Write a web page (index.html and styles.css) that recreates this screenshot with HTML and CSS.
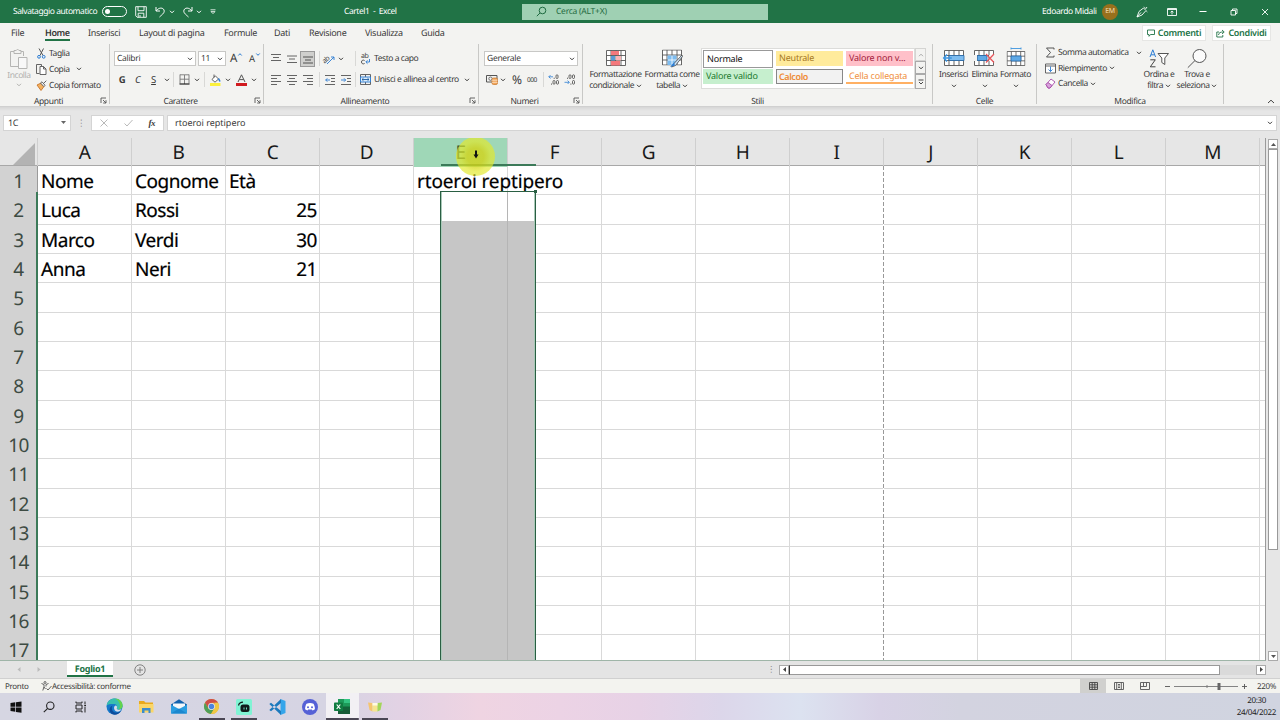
FILE: index.html
```html
<!DOCTYPE html>
<html lang="it">
<head>
  <meta charset="UTF-8" />
  <meta name="viewport" content="width=device-width, initial-scale=1.0" />
  <title>Cartel1 - Excel</title>
  <link rel="stylesheet" href="styles.css">
</head>
<body>

  <svg width="0" height="0" class="defs">
    <symbol id="chev" viewBox="0 0 6 4"><path d="M1 .8 3 2.8 5 .8" fill="none" stroke="currentColor" stroke-width="1"/></symbol>
    <symbol id="launch" viewBox="0 0 7 7"><path d="M1 6V1h5M3 3l3 3M6 3.2V6H3.2" fill="none" stroke="#555" stroke-width=".9"/></symbol>
    <symbol id="table" viewBox="0 0 20 16"><path d="M.5 .5h19v15H.5z" fill="#fff"/><path d="M.5 .5h19v15H.5zM.5 5.5h19M.5 10.5h19M5 .5v15M10 .5v15M15 .5v15" fill="none" stroke="#555" stroke-width=".9"/></symbol>
  </svg>

  <header class="titlebar">
    <div class="quick">
      <span class="autosave">Salvataggio automatico</span>
      <span class="toggle"></span>
      <svg class="save" width="12" height="12" viewBox="0 0 12 12" fill="none" stroke="#fff" stroke-width=".9"><path d="M.7 .7h10.6v10.6H2.2L.7 9.8zM3 .7v4h6v-4M3.2 11.3V7.2h5.6v4.1M5 11V9"/></svg>
      <svg class="undo" width="11" height="12" viewBox="0 0 11 12" fill="none" stroke="#fff"><path d="M1 1v4h4M1.2 4.8C4 1.2 8 1.5 9 4c.8 2.600-1 3.800-4.500 7"/></svg>
      <svg class="chev" width="6" height="4"><use href="#chev"/></svg>
      <svg class="redo" width="11" height="12" viewBox="0 0 11 12" fill="none" stroke="#fff"><path d="M10 1v4H6M9.800 4.800C7 1.200 3 1.500 2 4c-.8 2.600 1 3.800 4.500 7"/></svg>
      <svg class="chev" width="6" height="4"><use href="#chev"/></svg>
      <svg class="more" width="6" height="6" viewBox="0 0 6 6" fill="none" stroke="#fff" stroke-width=".8"><path d="M.5 .8h5M1 2.600l2 2 2-2z"/></svg>
    </div>
    <div class="doc">Cartel1&nbsp; -&nbsp; Excel</div>
    <div class="search">
      <svg width="11" height="11" viewBox="0 0 11 11" fill="none" stroke="#1f6b41"><circle cx="6.500" cy="4.500" r="3.300"/><path d="M4 7 .8 10.200"/></svg>
      <span>Cerca (ALT+X)</span>
    </div>
    <div class="account">
      <span class="user">Edoardo Midali</span>
      <span class="avatar">EM</span>
      <svg class="pen" width="12" height="12" viewBox="0 0 12 12" fill="none" stroke="#fff" stroke-width=".9"><path d="M1 11 3 5.500 7.500 2 10 4.500 6 9zM1 11l4-4.500M8 .8l1 1M11 1 9.500 3M10.500 5.500l.8.500"/></svg>
      <svg class="display" width="10" height="8" viewBox="0 0 10 8" fill="none" stroke="#fff" stroke-width=".9"><path d="M.5 .5h9v7h-9zM.5 1.500h9M5 6.500V3M3.500 4.300 5 3l1.500 1.300"/></svg>
      <svg class="win" width="8" height="8" viewBox="0 0 8 8" stroke="#fff"><path d="M.5 3.500h7"/></svg>
      <svg class="win" width="8" height="8" viewBox="0 0 8 8" fill="none" stroke="#fff" stroke-width=".9"><path d="M1 2.500h4.500V7H1zM2.500 2.500V1H7v4.500H5.500"/></svg>
      <svg width="8" height="8" viewBox="0 0 8 8" stroke="#fff" stroke-width=".9"><path d="M1 1l6 6M7 1 1 7"/></svg>
    </div>
  </header>

  <nav class="tabs">
    <span class="t-file">File</span>
    <span class="t-home active">Home</span>
    <span class="t-ins">Inserisci</span>
    <span class="t-lay">Layout di pagina</span>
    <span class="t-for">Formule</span>
    <span class="t-dat">Dati</span>
    <span class="t-rev">Revisione</span>
    <span class="t-vis">Visualizza</span>
    <span class="t-gui">Guida</span>
    <div class="share">
      <b class="pill comment"><svg width="8" height="8" viewBox="0 0 8 8" fill="none" stroke="#217346" stroke-width=".9"><path d="M.5 1h7v4.500H3.500L2 7.300V5.500H.5z"/></svg>Commenti</b>
      <b class="pill"><svg width="9" height="9" viewBox="0 0 9 9" fill="none" stroke="#217346" stroke-width=".9"><path d="M3 3H.8v5h6V6M2.500 6c.3-2.500 2-3 5-3M6 1l2.200 2L6 5"/></svg>Condividi</b>
    </div>
  </nav>

  <section class="ribbon">
    <div class="group g-clip">
      <div class="paste">
        <svg width="20" height="22" viewBox="0 0 20 22" fill="none" stroke="#b5b5b3"><path d="M9 18.500H1.500v-15H5M12 3.500h2.500V8M5 2.500h2.200a1.500 1.500 0 0 1 2.800 0h2V5.500H5z"/><path d="M9.500 9.500h8.500v11h-8.500z" fill="#f8f8f8"/></svg>
        <span>Incolla</span>
        <svg class="chev" width="6" height="4"><use href="#chev"/></svg>
      </div>
      <div class="stack">
        <div><svg width="11" height="11" viewBox="0 0 11 11" fill="none" stroke="#555"><path d="M3 .5 7 7.500M7.500 .5 4 7.500"/><g stroke="#2b7cd3"><circle cx="3" cy="8.800" r="1.400"/><circle cx="7.700" cy="8.800" r="1.400"/></g></svg>Taglia</div>
        <div><svg width="11" height="11" viewBox="0 0 11 11" fill="none" stroke="#555" stroke-width=".9"><path d="M3.500 9.500h-3v-9h5v1.500"/><path d="M4 2.500h3.500l2.500 2.500v5.500H4zM7.500 2.500V5H10" fill="#fff"/></svg>Copia <svg class="chev far" width="6" height="4"><use href="#chev"/></svg></div>
        <div><svg width="11" height="11" viewBox="0 0 11 11"><path d="M1 5 5 3l3 3.500-3 4z" fill="#f3b15f" stroke="#c36a1c" stroke-width=".8"/><path d="M4.500 3 6 1.800l3 3.500L7.800 6.500zM7.500 3.500 10.300 .7" fill="#fff" stroke="#555" stroke-width=".9"/></svg>Copia formato</div>
      </div>
      <footer>Appunti</footer><svg class="launch" width="7" height="7"><use href="#launch"/></svg>
    </div>

    <div class="group g-font">
      <div class="line font1">
        <span class="box">Calibri<svg class="chev" width="6" height="4"><use href="#chev"/></svg></span>
        <span class="box">11<svg class="chev" width="6" height="4"><use href="#chev"/></svg></span>
        <span class="grow">A<svg width="4" height="3" viewBox="0 0 4 3"><path d="M.3 2.500 2 .7l1.700 1.800" fill="none" stroke="#2b7cd3"/></svg></span>
        <span class="shrink">A<svg width="4" height="3" viewBox="0 0 4 3"><path d="M.3 .5 2 2.300 3.700 .5" fill="none" stroke="#2b7cd3"/></svg></span>
      </div>
      <div class="line font2">
        <b class="fmt">G</b><i class="fmt">C</i><u class="fmt">S</u>
        <svg class="chev" width="6" height="4"><use href="#chev"/></svg>
        <hr>
        <svg width="11" height="11" viewBox="0 0 11 11" fill="none" stroke="#777" stroke-width=".9"><path d="M1 .5v9M10 .5v9M1 .8h9M5.500 1v9M1 5.200h9"/><path d="M.5 10h10" stroke="#222" stroke-width="1.200"/></svg>
        <svg class="chev" width="6" height="4"><use href="#chev"/></svg>
        <hr>
        <svg width="11" height="12" viewBox="0 0 11 12" fill="none"><path d="M2 5.500 5.300 1.800 8.500 5 5 8.200zM4 .5v3" stroke="#555" stroke-width=".9" fill="#fff"/><path d="M8.500 4.500 10 7.500" stroke="#2b7cd3" stroke-width="1.500"/><path d="M0 9h10.500v3H0z" fill="#fbf03c"/></svg>
        <svg class="chev" width="6" height="4"><use href="#chev"/></svg>
        <svg width="11" height="12" viewBox="0 0 11 12" fill="none"><path d="M2 8 5.500 .8 9 8M3.200 5.600h4.600" stroke="#555"/><path d="M0 9h11v3H0z" fill="#d11a1f"/></svg>
        <svg class="chev" width="6" height="4"><use href="#chev"/></svg>
      </div>
      <footer>Carattere</footer><svg class="launch" width="7" height="7"><use href="#launch"/></svg>
    </div>

    <div class="group g-align">
      <div class="line al1">
        <svg width="10" height="10" viewBox="0 0 10 10" stroke="#555" stroke-width=".9"><path d="M0 .5h10M2 3.500h6M0 6.500h10"/></svg>
        <svg width="10" height="10" viewBox="0 0 10 10" stroke="#555" stroke-width=".9"><path d="M0 2h10M2 5h6M0 8.500h10"/></svg>
        <span class="pressed"><svg width="10" height="10" viewBox="0 0 10 10" stroke="#444" stroke-width=".9"><path d="M0 3h10M2 6h6M0 9h10"/></svg></span>
        <hr>
        <svg width="12" height="12" viewBox="0 0 12 12" fill="none"><text x="-1" y="8" font-size="7" fill="#444" transform="rotate(-40 4 6)">ab</text><path d="M4 11 11 4M8 4h3v3" stroke="#2b7cd3" stroke-width=".9"/></svg>
        <svg class="chev" width="6" height="4"><use href="#chev"/></svg>
        <hr>
        <svg width="11" height="12" viewBox="0 0 11 12" fill="none"><text x="1" y="5" font-size="7" fill="#444">ab</text><path d="M4.600 7.500C2.800 6.500 1.500 7.500 1.500 9s1.300 2.500 3.100 1.500" stroke="#444" stroke-width=".9"/><path d="M9.500 6v3H6M7.500 7.300 5.800 9l1.700 1.700" stroke="#2b7cd3" stroke-width=".9"/></svg>
        <span>Testo a capo</span>
      </div>
      <div class="line al2">
        <svg width="10" height="10" viewBox="0 0 10 10" stroke="#555" stroke-width=".9"><path d="M0 .5h10M0 3.500h6M0 6.500h10M0 9.500h6"/></svg>
        <svg width="10" height="10" viewBox="0 0 10 10" stroke="#555" stroke-width=".9"><path d="M0 .5h10M2 3.500h6M0 6.500h10M2 9.500h6"/></svg>
        <svg width="10" height="10" viewBox="0 0 10 10" stroke="#555" stroke-width=".9"><path d="M0 .5h10M4 3.500h6M0 6.500h10M4 9.500h6"/></svg>
        <hr>
        <svg width="10" height="10" viewBox="0 0 10 10" fill="none" stroke="#555" stroke-width=".9"><path d="M0 .5h10M6 3.500h4M6 6.500h4M0 9.500h10"/><path d="M5 5H.7M2.300 3.300.7 5l1.600 1.700" stroke="#2b7cd3"/></svg>
        <svg width="10" height="10" viewBox="0 0 10 10" fill="none" stroke="#555" stroke-width=".9"><path d="M0 .5h10M6 3.500h4M6 6.500h4M0 9.500h10"/><path d="M0 5h4.500M3 3.300 4.700 5 3 6.700" stroke="#2b7cd3"/></svg>
        <hr>
        <svg width="11" height="11" viewBox="0 0 11 11" fill="none" stroke="#555" stroke-width=".9"><path d="M.5 .5h10v10H.5zM5.500 .5v2.500M5.500 8v2.500"/><path d="M.5 3h10v5H.5z" fill="#dcedfb" stroke="#2b7cd3"/><path d="M2 5.500h7M3.500 4.200 2 5.500l1.500 1.300M7.500 4.200 9 5.500 7.500 6.800" stroke="#1f5f9f"/></svg>
        <span>Unisci e allinea al centro</span>
        <svg class="chev" width="6" height="4"><use href="#chev"/></svg>
      </div>
      <footer>Allineamento</footer><svg class="launch" width="7" height="7"><use href="#launch"/></svg>
    </div>

    <div class="group g-num">
      <div class="line"><span class="box">Generale<svg class="chev" width="6" height="4"><use href="#chev"/></svg></span></div>
      <div class="line num2">
        <svg width="12" height="11" viewBox="0 0 12 11" fill="none"><path d="M.5 1.500h10.500v6.500H.5z" stroke="#555"/><circle cx="4.500" cy="4.700" r="1.700" stroke="#555" stroke-width=".8"/><rect x="6" y="4" width="5.500" height="6.500" rx="1.500" fill="#f2a65a" stroke="#c9762a" stroke-width=".7"/><path d="M6 6.200h5.500M6 8.300h5.500" stroke="#fff" stroke-width=".6"/></svg>
        <svg class="chev" width="6" height="4"><use href="#chev"/></svg>
        <span class="pct">%</span>
        <span class="zeros">000</span>
        <hr>
        <svg width="12" height="11" viewBox="0 0 12 11" fill="none" stroke="#444" stroke-width=".8"><rect x="8" y=".8" width="2" height="3.700" rx="1"/><rect x="5" y="6.500" width="2" height="3.700" rx="1"/><rect x="8.500" y="6.500" width="2" height="3.700" rx="1"/><path d="M3.500 9.500v1.200M6.200 3.700v1.200"/><path d="M5 2.800H.8M2.500 1.100.8 2.800l1.700 1.700" stroke="#2b7cd3"/></svg>
        <svg width="12" height="11" viewBox="0 0 12 11" fill="none" stroke="#444" stroke-width=".8"><rect x="5" y=".8" width="2" height="3.700" rx="1"/><rect x="8.500" y=".8" width="2" height="3.700" rx="1"/><rect x="8.500" y="6.500" width="2" height="3.700" rx="1"/><path d="M3.500 3.700v1.200M6.900 9.500v1.200"/><path d="M.5 8.300h4.700M3.600 6.600l1.700 1.700L3.600 10" stroke="#2b7cd3"/></svg>
      </div>
      <footer>Numeri</footer><svg class="launch" width="7" height="7"><use href="#launch"/></svg>
    </div>

    <div class="group g-style wide">
      <div class="big b-cond">
        <svg width="20" height="17" viewBox="0 0 20 17"><use href="#table" width="20" height="16"/><path d="M5 1h8v4H5zM5 11h9v4.500H5z" fill="#f4787c"/><path d="M5 6h4v4.500H5z" fill="#5b9bd5"/><path d="M10 6h5v4.500h-5z" fill="#f9b4b6"/></svg>
        <span>Formattazione</span><span>condizionale <svg class="chev" width="6" height="4"><use href="#chev"/></svg></span>
      </div>
      <div class="big b-tab">
        <svg width="21" height="18" viewBox="0 0 21 18"><use href="#table" width="20" height="16"/><path d="M5.500 6h9v9.500h-9z" fill="#7dbcf0"/><path d="M6 10.500h12M10 6v9" stroke="#fff" stroke-width=".8"/><path d="M20 5.500 12 14l-2.500 3.500L13.500 16l7-9z" fill="#cfe6fa" stroke="#444" stroke-width=".8"/><path d="m12 13-4 4.500 5-1.500z" fill="#2b7cd3"/></svg>
        <span>Formatta come</span><span>tabella <svg class="chev" width="6" height="4"><use href="#chev"/></svg></span>
      </div>
      <div class="gallery">
        <span class="s-norm">Normale</span><span class="s-neu">Neutrale</span><span class="s-bad">Valore non v...</span>
        <span class="s-good">Valore valido</span><span class="s-calc">Calcolo</span><span class="s-link">Cella collegata</span>
      </div>
      <div class="scroller">
        <span class="off"><svg class="chev up" width="6" height="4"><use href="#chev"/></svg></span>
        <span><svg class="chev" width="6" height="4"><use href="#chev"/></svg></span>
        <span><svg width="6" height="6" viewBox="0 0 6 6" fill="none" stroke="#333" stroke-width=".9"><path d="M.5 1h5M1 3l2 2 2-2"/></svg></span>
      </div>
      <footer>Stili</footer>
    </div>

    <div class="group g-cells wide">
      <div class="big">
        <svg width="21" height="17" viewBox="0 0 21 17"><use href="#table" width="20" height="16" x="1"/><path d="M6 5.500h15v5H6z" fill="#7dbcf0" stroke="#2467a8" stroke-width=".8"/><path d="M.8 8h8M4 4.500.8 8 4 11.500" fill="none" stroke="#3d94de" stroke-width="1.600"/></svg>
        <span>Inserisci</span><span><svg class="chev" width="6" height="4"><use href="#chev"/></svg></span>
      </div>
      <div class="big">
        <svg width="21" height="17" viewBox="0 0 21 17"><use href="#table" width="20" height="16"/><path d="M0 5h3v6H0zM15 5h6v6h-6z" fill="#f3f3f1"/><path d="M3.500 5.500H13v5H3.500z" fill="#5fa9e6" stroke="#2467a8" stroke-width=".8"/><path d="m12 4 8 8.500M20 4l-8 8.500" stroke="#e8545a" stroke-width="1.200"/></svg>
        <span>Elimina</span><span><svg class="chev" width="6" height="4"><use href="#chev"/></svg></span>
      </div>
      <div class="big b-size">
        <svg width="20" height="19" viewBox="0 0 20 19"><use href="#table" width="19" height="15" y="2" x=".5"/><path d="M5 7h10v5H5z" fill="#5fa9e6" stroke="#2467a8" stroke-width=".8"/><path d="M5 -.5h10M5 -1.500v2M15 -1.500v2" stroke="#3d94de" stroke-width=".9"/></svg>
        <span>Formato</span><span><svg class="chev" width="6" height="4"><use href="#chev"/></svg></span>
      </div>
      <footer>Celle</footer>
    </div>

    <div class="group g-edit wide">
      <div class="stack">
        <div><svg width="11" height="11" viewBox="0 0 11 11" fill="none" stroke="#444" stroke-width=".9"><path d="M9 2.500V1H1.500L5.500 5.500 1.500 10H9V8.500"/></svg>Somma automatica <svg class="chev far" width="6" height="4"><use href="#chev"/></svg></div>
        <div><svg width="11" height="11" viewBox="0 0 11 11" fill="none" stroke="#555" stroke-width=".9"><path d="M.5 1h10v9H.5zM.5 3h10" fill="#fff"/><path d="M5.500 3.500v5M3.500 6.500l2 2 2-2" stroke="#2b7cd3"/></svg>Riempimento <svg class="chev" width="6" height="4"><use href="#chev"/></svg></div>
        <div><svg width="11" height="11" viewBox="0 0 11 11" fill="#fff" stroke="#a64aa8" stroke-width=".9"><path d="M1 6.500 6 1l4 3-5 6H3z"/><path d="M1 6.500 3 4.500 7 7.500 5 10H3z" fill="#d9a3dc"/></svg>Cancella <svg class="chev" width="6" height="4"><use href="#chev"/></svg></div>
      </div>
      <div class="big b-sort">
        <svg width="20" height="19" viewBox="0 0 20 19" fill="none"><path d="M1 8 3.800 .8 6.600 8M2 5.800h3.600" stroke="#2b7cd3"/><path d="M1.300 10.800h5L1.300 17.800h5.200" stroke="#444"/><path d="M9 4.500h10.500L15.800 9v6.500L12.800 13.500V9z" fill="#fff" stroke="#555"/></svg>
        <span>Ordina e</span><span>filtra <svg class="chev" width="6" height="4"><use href="#chev"/></svg></span>
      </div>
      <div class="big b-find">
        <svg width="20" height="20" viewBox="0 0 20 20" fill="none" stroke="#555"><circle cx="12.500" cy="7.500" r="6.500" fill="#fbfbfb"/><path d="M8 12 .8 19.200"/></svg>
        <span>Trova e</span><span>seleziona <svg class="chev" width="6" height="4"><use href="#chev"/></svg></span>
      </div>
      <footer>Modifica</footer>
    </div>
    <svg class="collapse" width="8" height="5" viewBox="0 0 8 5"><path d="M1 4 4 1.200 7 4" fill="none" stroke="#444"/></svg>
  </section>

  <section class="formula">
    <div class="name">1C<svg width="5" height="3" viewBox="0 0 5 3"><path d="M0 0h5L2.500 3z" fill="#666"/></svg></div>
    <div class="dots">⋮</div>
    <div class="fx">
      <svg width="8" height="8" viewBox="0 0 8 8" stroke="#b9b9b9"><path d="M.5 .5l7 7M7.500 .5l-7 7"/></svg>
      <svg width="9" height="8" viewBox="0 0 9 8" fill="none" stroke="#b9b9b9"><path d="M.5 4.500 3 7l5.500-6"/></svg>
      <em>fx</em>
    </div>
    <div class="value">rtoeroi reptipero<svg class="chev" width="6" height="4"><use href="#chev"/></svg></div>
  </section>

  <main class="sheet">
    <div class="grid">
      <div class="cols">
        <span class="corner"><svg width="22" height="22" viewBox="0 0 22 22"><path d="M22 0v22H0z" fill="#b3b3b3"/></svg></span>
        <span>A</span><span>B</span><span>C</span><span>D</span><span class="hot">E</span><span>F</span><span>G</span><span>H</span><span>I</span><span>J</span><span>K</span><span>L</span><span>M</span><span></span>
      </div>
      <div class="body">
        <div class="row"><b>1</b><span>Nome</span><span>Cognome</span><span>Età</span><span></span><span class="long">rtoeroi reptipero</span></div>
        <div class="row"><b>2</b><span>Luca</span><span>Rossi</span><span class="n">25</span></div>
        <div class="row"><b>3</b><span>Marco</span><span>Verdi</span><span class="n">30</span></div>
        <div class="row"><b>4</b><span>Anna</span><span>Neri</span><span class="n">21</span></div>
        <div class="row"><b>5</b></div>
        <div class="row"><b>6</b></div>
        <div class="row"><b>7</b></div>
        <div class="row"><b>8</b></div>
        <div class="row"><b>9</b></div>
        <div class="row"><b>10</b></div>
        <div class="row"><b>11</b></div>
        <div class="row"><b>12</b></div>
        <div class="row"><b>13</b></div>
        <div class="row"><b>14</b></div>
        <div class="row"><b>15</b></div>
        <div class="row"><b>16</b></div>
        <div class="row last"><b>17</b></div>
      </div>
      <div class="pagebreak"></div>
      <div class="selection"><i></i></div>
      <div class="handle"></div>
      <div class="headline"></div>
      <div class="rowline"></div>
      <div class="pointer"><svg width="6" height="9" viewBox="0 0 6 9"><path d="M2 .5h2v4h1.500L3 8.500.5 4.500H2z" fill="#111"/></svg></div>
    </div>
    <div class="vscroll">
      <span class="btn"><svg width="5" height="3" viewBox="0 0 5 3"><path d="M0 3h5L2.500 0z" fill="#555"/></svg></span>
      <span class="thumb"></span>
      <span class="btn end"><svg width="5" height="3" viewBox="0 0 5 3"><path d="M0 0h5L2.500 3z" fill="#555"/></svg></span>
    </div>
  </main>

  <section class="sheets">
    <svg class="nav1" width="4" height="5" viewBox="0 0 4 5"><path d="M3.500 0v5L.5 2.500z" fill="#bbb"/></svg>
    <svg class="nav2" width="4" height="5" viewBox="0 0 4 5"><path d="M.5 0v5l3-2.500z" fill="#bbb"/></svg>
    <b class="sheet-tab">Foglio1</b>
    <svg class="add" width="12" height="12" viewBox="0 0 12 12" fill="none" stroke="#777" stroke-width=".9"><circle cx="6" cy="6" r="5.200"/><path d="M6 3v6M3 6h6"/></svg>
    <span class="grip">⋮</span>
    <div class="hscroll">
      <span class="btn"><svg width="3" height="5" viewBox="0 0 3 5"><path d="M3 0v5L0 2.500z" fill="#444"/></svg></span>
      <span class="thumb"></span>
      <span class="btn end"><svg width="3" height="5" viewBox="0 0 3 5"><path d="M0 0v5l3-2.500z" fill="#444"/></svg></span>
    </div>
  </section>

  <section class="status">
    <span class="ready">Pronto</span>
    <svg width="11" height="10" viewBox="0 0 11 10" fill="none" stroke="#555" stroke-width=".9"><circle cx="4" cy="1.500" r="1"/><path d="M.5 2.500 3 3.500v2L1.800 9.500M7.500 2.500 5 3.500v2M5.500 7.500l1.500 1.500 3.500-4M3 6l1.500 2"/></svg>
    <span class="acc">Accessibilità: conforme</span>
    <div class="views">
      <span class="on"><svg width="9" height="8" viewBox="0 0 9 8" fill="none" stroke="#444" stroke-width=".9"><path d="M.5 .5h8v7h-8zM.5 2.800h8M.5 5.200h8M3.200 .5v7M5.800 .5v7"/></svg></span>
      <span><svg width="10" height="8" viewBox="0 0 10 8" fill="none" stroke="#555" stroke-width=".9"><path d="M.5 .5h9v7h-9zM2.700 .5v7M7.300 .5v7M4 2.500h2M4 4h2M4 5.500h2"/></svg></span>
      <span><svg width="10" height="8" viewBox="0 0 10 8" fill="none" stroke="#555" stroke-width=".9"><path d="M.5 .5h9v7h-9zM3.500 .5V4.500M6.500 .5v4H.5"/></svg></span>
    </div>
    <svg class="zoom" width="82" height="9" viewBox="0 0 82 9"><path d="M0 4.500h5M77 4.500h5M79.500 2v5" stroke="#555" stroke-width=".9"/><path d="M9 4.500h64M42 3v3" stroke="#777" stroke-width=".9"/><path d="M52.500 1h3v7h-3z" fill="#666"/></svg>
    <span class="pctzoom">220%</span>
  </section>

  <footer class="taskbar">
    <span class="app"><svg width="12" height="12" viewBox="0 0 12 12" fill="#111"><path d="M.5 2 5.300 1.300v4.400H.5zM6 1.200 11.500.4v5.300H6zM.5 6.400h4.800v4.400L.5 10.100zM6 6.400h5.500v5.300L6 10.900z"/></svg></span>
    <span class="app"><svg width="12" height="12" viewBox="0 0 12 12" fill="none" stroke="#222" stroke-width="1.100"><circle cx="7.300" cy="4.700" r="3.700"/><path d="M4.700 7.300 .8 11.200"/></svg></span>
    <span class="app"><svg width="12" height="12" viewBox="0 0 12 12" fill="none" stroke="#222"><path d="M1 .5v1.500h6V.5M1 4h6v4H1zM1 11.500V10h6v1.500M10 .5v2.500M10 6v5.500"/><path d="M9.200 4.500h1.800" stroke-width="1.500"/></svg></span>
    <span class="app"><svg width="17" height="17" viewBox="0 0 17 17"><circle cx="8.500" cy="8.500" r="8" fill="#1679ca"/><path d="M.6 8C1 3 5 .5 8.600.5c5 0 8 3.500 8 7 0 3-2.500 4.500-5 4-1-.2-1.500-.8-1-1.500 1-1.500.2-4-2.600-4C5 6 1.500 6 .6 8z" fill="#39bfae"/><path d="M8.600.5c5 0 8 3.500 8 7 0 2.500-2 4-4 4C16 8 13 2 8.600.5z" fill="#64d34d"/><path d="M6.500 7.500C5 10 6 14 9.500 14.500c2 .3 4-.5 5.500-1.500-2 3.500-6 4.500-9 3C2.500 13.500 3 9 6.500 7.500z" fill="#0d4c9c"/><path d="M9.500 7.500c1.500 0 2 1.500 1.200 3 .3 1.200 3 1.800 5 .5-1 2-3 3-5.200 2.500-2.500-.7-3.500-5-1-6z" fill="#d6dcea"/></svg></span>
    <span class="app"><svg width="15" height="14" viewBox="0 0 15 14"><path d="M0 1h5l1.500 1.500H14V12H0z" fill="#e8a91d"/><path d="M0 4h14.500v8.500H0z" fill="#fbd667"/><path d="M3 13V8h8.500v5H9.500v-2.500h-4V13z" fill="#3c8ccd"/></svg></span>
    <span class="app"><svg width="16" height="15" viewBox="0 0 16 15"><path d="M0 5.500 8 .3l8 5.200V14H0z" fill="#1263ae"/><path d="M2 4.500h12v7H2z" fill="#f5f8fa"/><path d="M0 5.800 8 10l8-4.200v8.700H0z" fill="#2a9de0"/><path d="m0 14.500 8-5 8 5z" fill="#1b87cf"/></svg></span>
    <span class="app run"><svg width="15" height="15" viewBox="0 0 15 15"><circle cx="7.500" cy="7.500" r="7.500" fill="#e2a83a"/><path d="M1 3.800A7.500 7.500 0 0 1 14 3.800H7.500L4.300 9z" fill="#cf4e47"/><path d="M1 3.800a7.500 7.500 0 0 0 6 11.200l3.300-5.600-5.500.6z" fill="#4f9f58"/><path d="M14 3.800A7.500 7.500 0 0 1 7 15l3.700-6V3.800z" fill="#efc844"/><circle cx="7.500" cy="7.500" r="3.400" fill="#eee"/><circle cx="7.500" cy="7.500" r="2.700" fill="#4a84df"/></svg></span>
    <span class="app run"><svg width="16" height="16" viewBox="0 0 16 16"><rect width="16" height="16" rx="1.500" fill="#80f3d4"/><rect x="4.500" y="5.500" width="9" height="7.500" rx="2.500" fill="#101c1c"/><path d="M2.500 6.500C3 4.500 4.500 3.200 7 3.200" fill="none" stroke="#101c1c" stroke-width="1.200"/><path d="M8 8.500v2M10.500 8.500v2" stroke="#80f3d4" stroke-width=".9"/></svg></span>
    <span class="app"><svg width="17" height="16" viewBox="0 0 17 16"><path d="M11.500 0 16.500 2v12l-5 2z" fill="#35a5ea"/><path d="M.3 5 2 3.800 12 12v4zM.3 11 2 12.200 12 4V0z" fill="#1b79bd"/></svg></span>
    <span class="app"><svg width="16" height="16" viewBox="0 0 16 16"><circle cx="8" cy="8" r="8" fill="#5561d6"/><path d="M4.500 4.800c2-1 5-1 7 0 1 1.700 1.500 3.500 1.400 5.500-.8.700-1.600 1-2.400 1.200l-.6-1H6.100l-.6 1c-.8-.2-1.600-.5-2.400-1.200 0-2 .4-3.800 1.400-5.500z" fill="#fff"/><circle cx="6" cy="8.200" r="1" fill="#5561d6"/><circle cx="10" cy="8.200" r="1" fill="#5561d6"/></svg></span>
    <span class="app run current"><svg width="16" height="15" viewBox="0 0 16 15"><path d="M4 0h12v15H4z" fill="#1d9a59"/><path d="M10 0h6v4h-6z" fill="#33c481"/><path d="M4 7.500h6V11H4zM10 7.500h6V15h-6z" fill="#13653a"/><path d="M4 11h12v4H4z" fill="#185c37"/><rect y="3.500" width="9" height="8.500" rx=".8" fill="#107c41"/><path d="m2.700 5.500 3.600 4.500M6.300 5.500 2.700 10" stroke="#fff" stroke-width="1.200"/></svg></span>
    <span class="app run"><svg width="14" height="10" viewBox="0 0 14 10"><path d="M0 .5 4.500 1v8.500L1.500 8z" fill="#f5c56f"/><path d="M4.500 1h5v8.500h-5z" fill="#f7e58f"/><path d="M9.500 1 14 .5 12.500 8l-3 1.500z" fill="#a3d659"/><path d="M4.500 1h5v2.500h-5z" fill="#fffbe4"/></svg></span>
    <div class="clock"><span>20:30</span><span>24/04/2022</span></div>
  </footer>

</body>
</html>
```
FILE: styles.css
```css
* {
  box-sizing: border-box;
}

body {
  width: 1280px;
  height: 720px;
  margin: 0;
  overflow: hidden;
  display: flex;
  flex-direction: column;
  font-family: "Noto Sans", "Open Sans", sans-serif;
  font-size: 8.5px;
  letter-spacing: -0.45px;
  line-height: 11px;
  text-rendering: geometricPrecision;
  color: #3a3a3a;
  background: #e6e6e6;
  white-space: nowrap;
}

svg {
  display: block;
  flex: none;
  overflow: visible;
}

.defs {
  position: absolute;
}

/* title bar */
.titlebar {
  height: 23px;
  flex: none;
  display: grid;
  grid-template-columns: 344px 178px 246px 1fr;
  align-items: center;
  background: #217346;
  color: #fff;
}

.quick {
  display: flex;
  align-items: center;
  padding-left: 13px;
}

.autosave {
  width: 89px;
}

.toggle {
  width: 25px;
  height: 11px;
  border: 1px solid #fff;
  border-radius: 6px;
  padding: 2px;
}

.toggle::before {
  content: "";
  display: block;
  width: 5px;
  height: 5px;
  border-radius: 50%;
  background: #fff;
}

.save { margin-left: 8px; }
.undo { margin-left: 8px; }
.redo { margin-left: 7px; }
.more { margin-left: 8px; }
.quick .chev { margin-left: 3px; }

.search {
  height: 16px;
  display: flex;
  align-items: center;
  gap: 9px;
  padding-left: 14px;
  background: #9fd0b3;
  color: #1f6b41;
  letter-spacing: -0.25px;
}

.account {
  display: flex;
  align-items: center;
  padding-left: 274px;
  letter-spacing: -0.4px;
}

.user {
  width: 60px;
}

.avatar {
  width: 16px;
  height: 16px;
  margin-right: 18px;
  border-radius: 50%;
  background: #98701c;
  color: #f2dcae;
  font-size: 7px;
  line-height: 16px;
  text-align: center;
}

.pen { margin-right: 19px; }
.display { margin-right: 22px; }
.win { margin-right: 23px; }

/* ribbon tabs */
.tabs {
  height: 21px;
  flex: none;
  display: flex;
  align-items: flex-start;
  padding: 4px 0 0 11px;
  background: #f3f3f1;
  font-size: 9px;
  letter-spacing: -0.3px;
  line-height: 12px;
}

.t-file { width: 34px; }
.t-home { margin-right: 18px; }
.t-ins { width: 51px; }
.t-lay { width: 85px; }
.t-for { width: 50px; }
.t-dat { width: 35px; }
.t-rev { width: 56px; }
.t-vis { width: 56px; }

.active {
  width: 25px;
  height: 14px;
  font-weight: 600;
  color: #333;
  border-bottom: 2px solid #217346;
  letter-spacing: -0.4px;
}

.share {
  display: flex;
  gap: 6px;
  margin: -2px 9px 0 auto;
}

.pill {
  height: 16px;
  width: 59px;
  display: flex;
  align-items: center;
  justify-content: center;
  gap: 3px;
  background: #fff;
  border: 1px solid #e6e6e4;
  color: #217346;
  font-weight: 600;
}

.comment {
  width: 64px;
}

/* ribbon */
.ribbon {
  height: 63px;
  flex: none;
  display: flex;
  background: #f3f3f1;
  border-bottom: 1px solid #d0d0d0;
  position: relative;
}

.group {
  position: relative;
  height: 60px;
  border-right: 1px solid #c8c8c6;
}

.group > footer {
  position: absolute;
  left: 0;
  right: 12px;
  bottom: -3px;
  text-align: center;
  letter-spacing: -0.35px;
}

.wide > footer {
  right: 0;
}

.launch {
  position: absolute;
  right: 2px;
  bottom: 0;
}

.chev {
  display: inline-block;
}

.up {
  transform: rotate(180deg);
}

.g-clip { width: 110px; display: flex; padding-top: 1px; }
.g-font { width: 154px; padding-left: 4px; }
.g-align { width: 215px; padding-left: 4px; }
.g-num { width: 104px; padding-left: 5px; }
.g-style { width: 350px; display: flex; }
.g-cells { width: 104px; display: flex; padding-left: 5px; }
.g-edit { width: 187px; display: flex; }

.paste {
  width: 36px;
  display: flex;
  flex-direction: column;
  align-items: center;
  padding: 3px 0 0 2px;
  color: #b0b0ae;
}

.paste span {
  margin: 0 0 2px;
}

.stack div {
  display: flex;
  align-items: center;
  gap: 2px;
  height: 16px;
}

.stack .far {
  margin-left: 5px;
}

.line {
  height: 21px;
  display: grid;
  align-items: center;
  justify-items: center;
}

.line:first-child {
  margin-top: 4px;
}

.line hr {
  width: 1px;
  height: 15px;
  margin: 0;
  border: 0;
  background: #d8d8d6;
}

.box {
  width: 100%;
  height: 15px;
  display: flex;
  align-items: center;
  justify-content: space-between;
  padding: 0 2px;
  background: #fff;
  border: 1px solid #c8c8c6;
  letter-spacing: -0.3px;
}

.font1 {
  grid-template-columns: 82px 28px 17px 18px;
  column-gap: 2px;
}

.font2 { grid-template-columns: 16px 15px 17px 9px 5px 16px 9px 7px 15px 9px 18px 8px; }
.al1 { grid-template-columns: 16px 16px 16px 6px 14px 9px 11px 18px auto; }
.al2 { grid-template-columns: 16px 16px 16px 6px 16px 16px 2px 18px 88px 9px; }
.num2 { grid-template-columns: 15px 8px 20px 14px 5px 16px 16px; }
.g-num .box { width: 94px; justify-self: start; }

.al1, .al2 { justify-content: start; }
.line > span { justify-self: start; }
.al1 hr:nth-of-type(2) { justify-self: end; }

.grow, .shrink {
  display: flex;
  align-items: flex-start;
  padding-left: 2px;
  font-size: 11.500px;
}

.shrink {
  font-size: 9.5px;
}

.grow svg, .shrink svg {
  margin-left: 1px;
}

.fmt {
  font-size: 9.5px;
}

.pressed {
  width: 15px;
  height: 16px;
  display: grid;
  place-items: center;
  background: #cfcfcd;
  border: 1px solid #999;
}

.pct {
  font-size: 12px;
  padding-left: 5px;
}

.zeros {
  font-size: 6.5px;
}

.big {
  width: 31px;
  display: flex;
  flex-direction: column;
  align-items: center;
}

.big > svg {
  height: 25px;
  padding-top: 4px;
  box-sizing: border-box;
}

.b-cond { width: 65px; }
.b-tab { width: 48px; }
.b-sort { width: 40px; margin-left: 4px; }
.b-find { width: 36px; }

.gallery {
  width: 214px;
  height: 41px;
  margin: 4px 0 0 5px;
  display: grid;
  grid-template-columns: 70px 67px 67px;
  grid-template-rows: 17px 16px;
  gap: 1px 3px;
  padding: 1px 0 0 1px;
  background: #fff;
  border: 1px solid #dcdcda;
  font-size: 9px;
  letter-spacing: -0.2px;
}

.gallery span {
  padding: 0 3px;
  align-self: center;
  height: 15px;
  line-height: 14px;
}

.gallery .s-norm {
  height: 18px;
  border: 1.500px solid #999;
  line-height: 15px;
  color: #111;
}

.s-neu { background: #ffeb9c; color: #a6781f; }
.s-bad { background: #ffc0c9; color: #a3203c; }
.s-good { background: #c6efce; color: #1c7a2f; }

.gallery .s-calc {
  background: #f2f2f2;
  color: #ee8a35;
  border: 1px solid #888;
  font-weight: 600;
  line-height: 13px;
  padding: 0 2px;
  letter-spacing: -0.4px;
}

.s-link { color: #f08f3c; border-bottom: 2px solid #ffb063; }

.scroller {
  width: 11px;
  height: 41px;
  margin-top: 4px;
  display: grid;
}

.scroller span {
  display: grid;
  place-items: center;
  border: 1px solid #aaa;
}

.scroller .off {
  color: #aaa;
  border-color: #d4d4d2;
}

.g-edit .stack {
  width: 98px;
  padding: 1px 0 0 8px;
}

.g-edit .stack div {
  height: 15.500px;
}

.collapse {
  position: absolute;
  right: 5px;
  bottom: 2px;
}

/* formula bar */
.formula {
  height: 31px;
  flex: none;
  display: flex;
  align-items: center;
  padding: 0 3px;
  background: linear-gradient(#d6d6d6, #e6e6e6 4px);
  font-size: 9px;
}

.formula > div {
  height: 16px;
  display: flex;
  align-items: center;
}

.formula .name {
  width: 68px;
  justify-content: space-between;
  padding: 0 4px;
  background: #fff;
  border: 1px solid #d4d4d4;
}

.formula .dots {
  width: 20px;
  justify-content: center;
  color: #888;
}

.formula .fx {
  width: 73px;
  justify-content: space-between;
  padding: 0 8px;
  background: #fff;
  border: 1px solid #d4d4d4;
}

.fx em {
  font: italic bold 9px "Liberation Serif", serif;
}

.formula .value {
  flex: 1;
  margin-left: 3px;
  justify-content: space-between;
  padding: 0 3px 0 7px;
  background: #fff;
  border: 1px solid #d4d4d4;
  letter-spacing: 0;
}

/* worksheet */
.sheet {
  height: 523px;
  flex: none;
  display: flex;
  background: #e6e6e6;
}

.grid {
  width: 1266px;
  position: relative;
  overflow: hidden;
  border-right: 1px solid #9a9a9a;
  border-bottom: 1px solid #9fb5a8;
  font-size: 19px;
  letter-spacing: -0.5px;
  line-height: 28px;
  color: #000;
}

.cols {
  height: 28px;
  display: grid;
  grid-template-columns: 38px repeat(13, 94px) 6px;
  border-bottom: 1px solid #a8a8a8;
}

.cols span {
  text-align: center;
  border-right: 1px solid #cfcfcf;
  line-height: 29px;
  color: #1a1a1a;
}

.cols .corner {
  display: flex;
  align-items: flex-end;
  justify-content: flex-end;
  padding: 0 2px 2px 0;
}

.cols .hot {
  background: #9fd7b7;
  color: #24523a;
}

.body {
  display: grid;
  grid-auto-rows: 29.33px;
  background: repeating-linear-gradient(90deg, transparent 0 93px, #d9d9d9 93px 94px) 38px 0 no-repeat, #fff;
}

.row {
  display: grid;
  grid-template-columns: 38px repeat(13, 94px);
  border-bottom: 1px solid #d9d9d9;
}

.row b {
  font-weight: 400;
  line-height: 30px;
  text-align: center;
  color: #3d4b43;
  background: #d2d2d2;
  border-right: 1px solid #9a9a9a;
  border-bottom: 1px solid #bdbdbd;
}

.last {
  height: 24.500px;
  border-bottom: 0;
}

.row span {
  padding: 1px 3px 0;
  line-height: 28px;
  -webkit-text-stroke: 0.2px #000;
}

.row .n {
  text-align: right;
}

.row .long {
  letter-spacing: -0.15px;
}

.pagebreak {
  position: absolute;
  left: 883px;
  top: 28px;
  bottom: 0;
  width: 1px;
  background: repeating-linear-gradient(#999 0 4px, #fff 4px 6px);
}

.selection {
  position: absolute;
  left: 440px;
  top: 53px;
  width: 96px;
  height: 480px;
  border: 1px solid #2a5f43;
  background: linear-gradient(#fff 29px, #c6c6c6 29px);
  box-shadow: inset 1px 0 #a9c9b8, inset -1px 0 #a9c9b8;
}

.selection i {
  position: absolute;
  left: 66px;
  top: 0;
  bottom: 0;
  border-left: 1px solid #b5b5b5;
}

.handle {
  position: absolute;
  left: 534px;
  top: 52px;
  width: 3px;
  height: 3px;
  background: #2a5f43;
}

.headline {
  position: absolute;
  left: 441px;
  top: 26px;
  width: 95px;
  height: 2px;
  background: #3c7a59;
}

.rowline {
  position: absolute;
  left: 36px;
  top: 54px;
  bottom: 0;
  width: 2px;
  background: #3c7a59;
}

.pointer {
  position: absolute;
  left: 456px;
  top: -1px;
  width: 39px;
  height: 39px;
  border-radius: 50%;
  display: grid;
  place-items: center;
  padding-bottom: 4px;
  background: radial-gradient(rgba(210, 212, 24, 0.8) 30%, rgba(226, 232, 40, 0.68) 55%, rgba(226, 234, 60, 0.66));
}

.vscroll {
  width: 14px;
  display: flex;
  flex-direction: column;
  padding: 1px 2px 0;
}

.btn {
  display: grid;
  place-items: center;
  width: 10px;
  height: 10px;
  flex: none;
  background: #fff;
  border: 1px solid #aaa;
}

.thumb {
  background: #fff;
  border: 1px solid #999;
}

.vscroll .thumb {
  height: 401px;
}

.vscroll .end {
  margin-top: auto;
}

/* sheet tabs */
.sheets {
  height: 18px;
  flex: none;
  display: flex;
  align-items: center;
  background: #e4e4e4;
  border-bottom: 1px solid #d0d0d0;
}

.nav1 { margin-left: 17px; }
.nav2 { margin: 0 26px 0 16px; }

.sheet-tab {
  width: 46px;
  height: 16px;
  align-self: flex-start;
  background: #fff;
  border-bottom: 2px solid #217346;
  color: #217346;
  font-size: 9px;
  letter-spacing: -0.3px;
  line-height: 16px;
  text-align: center;
}

.add {
  margin-left: 21px;
}

.grip {
  margin-left: auto;
  width: 12px;
  color: #888;
}

.hscroll {
  width: 487px;
  height: 10px;
  margin-right: 14px;
  display: flex;
  background: #dadada;
}

.hscroll .thumb {
  width: 431px;
  border-left-color: #333;
}

.hscroll .end {
  margin-left: auto;
}

/* status bar */
.status {
  height: 14px;
  flex: none;
  display: flex;
  align-items: center;
  padding-left: 5px;
  background: #f3f3ef;
  font-size: 8px;
  letter-spacing: -0.33px;
}

.ready {
  width: 36px;
}

.views {
  height: 14px;
  margin-left: auto;
  display: flex;
}

.views span {
  width: 26px;
  display: grid;
  place-items: center;
}

.views .on {
  background: #d0d0ce;
}

.zoom {
  margin-left: 7px;
}

.pctzoom {
  width: 33px;
  padding-left: 10px;
}

/* taskbar */
.taskbar {
  height: 27px;
  flex: none;
  display: flex;
  padding-right: 4px;
  background: linear-gradient(90deg, #d6d6e2, #d6d4e3 330px, #e2d2e4 400px, #efd4e2 480px, #ecd3e5 560px, #e7d2e6 640px, #dcd6ea 720px, #dce2f0 800px, #d8d2e6 880px, #d3d3e0 960px, #d0d4e0);
}

.app {
  width: 32.600px;
  display: grid;
  place-items: center;
}

.run {
  background: linear-gradient(#4a4654, #4a4654) center bottom / 26px 2px no-repeat;
}

.current {
  background-color: #f2f0f4;
  background-size: 100% 2px;
}

.clock {
  margin-left: auto;
  display: grid;
  grid-auto-rows: 12px;
  padding-top: 2px;
  text-align: right;
  font-size: 8px;
  letter-spacing: -0.33px;
  color: #222;
}

.clock span:first-child {
  padding-right: 10px;
}
```
